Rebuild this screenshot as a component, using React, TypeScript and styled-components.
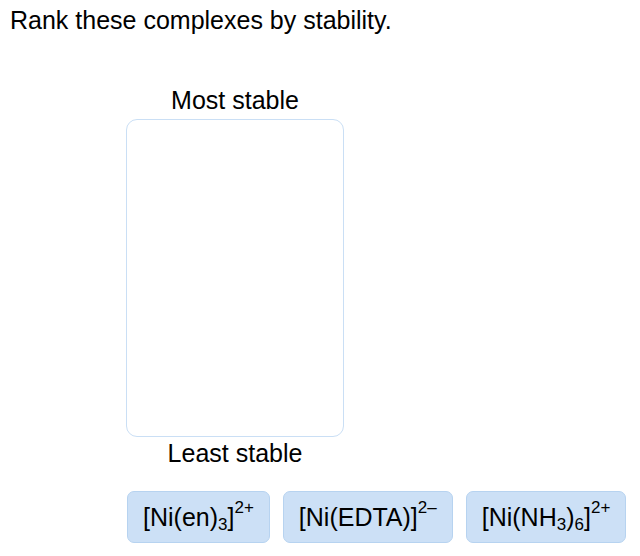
import { FC } from "react";
import styled, { createGlobalStyle } from "styled-components";

const GlobalStyle = createGlobalStyle`
  html, body {
    margin: 0;
    padding: 0;
    background: #ffffff;
  }
  body {
    font-family: "Liberation Sans", Arial, sans-serif;
    color: #000000;
  }
`;

const Page = styled.div`
  width: 640px;
  height: 556px;
  padding: 6px 0 0 10px;
  box-sizing: border-box;
  font-size: 25px;
  line-height: 29px;
`;

const Prompt = styled.div`
  margin: 0;
`;

const RankColumn = styled.div`
  margin: 51px 0 0 116px;
  width: 218px;
  display: flex;
  flex-direction: column;
  align-items: center;
`;

const EndLabel = styled.div<{ $bottom?: boolean }>`
  height: 29px;
  margin: ${(p) => (p.$bottom ? "2px 0 0" : "0 0 4px")};
  text-align: center;
  white-space: nowrap;
`;

const DropZone = styled.div`
  width: 218px;
  height: 318px;
  box-sizing: border-box;
  border: 1px solid #cadff5;
  border-radius: 11px;
  background: #ffffff;
`;

const ChipRow = styled.div`
  margin: 23px 0 0 117px;
  display: flex;
  gap: 13px;
`;

const ChipBox = styled.div`
  height: 52px;
  box-sizing: border-box;
  padding: 0 15px;
  display: flex;
  align-items: center;
  background: #cce0f6;
  border: 1px solid #b7d3f0;
  border-radius: 7px;
  white-space: nowrap;
`;

const Sub = styled.span`
  font-size: 17px;
  line-height: 0;
  vertical-align: -4px;
`;

const Sup = styled.span`
  font-size: 17px;
  line-height: 0;
  vertical-align: 13px;
`;

const ChipItem: FC<{ children: React.ReactNode }> = ({ children }) => (
  <ChipBox>
    <span>{children}</span>
  </ChipBox>
);

export default function App() {
  return (
    <>
      <GlobalStyle />
      <Page>
        <Prompt>Rank these complexes by stability.</Prompt>
        <RankColumn>
          <EndLabel>Most stable</EndLabel>
          <DropZone />
          <EndLabel $bottom>Least stable</EndLabel>
        </RankColumn>
        <ChipRow>
          <ChipItem>
            [Ni(en)<Sub>3</Sub>]<Sup>2+</Sup>
          </ChipItem>
          <ChipItem>
            [Ni(EDTA)]<Sup>2–</Sup>
          </ChipItem>
          <ChipItem>
            [Ni(NH<Sub>3</Sub>)<Sub>6</Sub>]<Sup>2+</Sup>
          </ChipItem>
        </ChipRow>
      </Page>
    </>
  );
}
